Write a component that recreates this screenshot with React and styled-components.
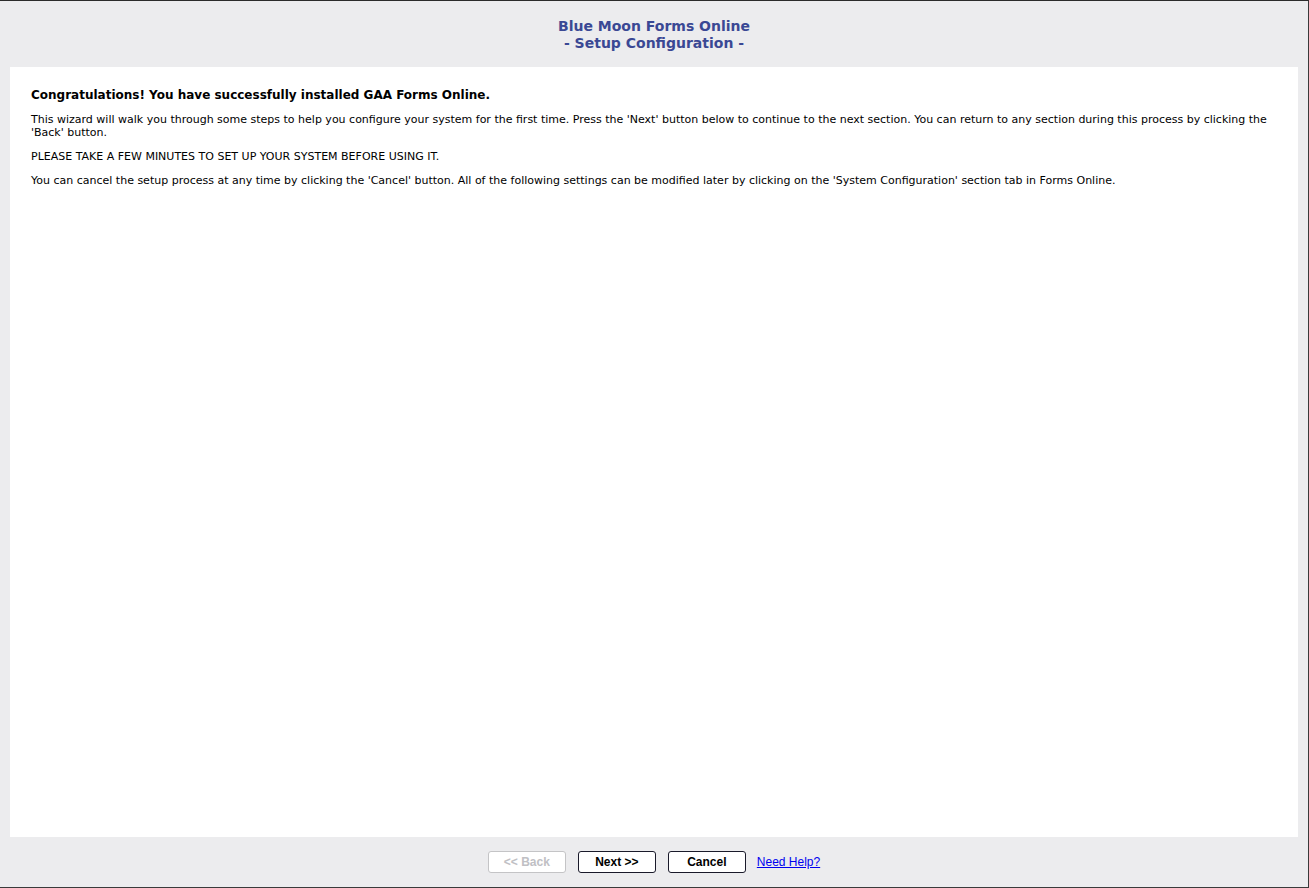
import React from 'react';
import styled, { createGlobalStyle } from 'styled-components';

const GlobalStyle = createGlobalStyle`
  html, body {
    margin: 0;
    padding: 0;
    background: #ececee;
  }
  * {
    box-sizing: border-box;
  }
`;

const Page = styled.div`
  height: 888px;
  display: flex;
  flex-direction: column;
  background: #ececee;
  border-top: 1px solid #2b2b2b;
  border-right: 1px solid #3a3a3a;
  border-bottom: 1px solid #3a3a3a;
  font-family: "DejaVu Sans", Verdana, sans-serif;
`;

const Header = styled.div`
  height: 66px;
  display: flex;
  flex-direction: column;
  align-items: center;
  justify-content: center;
  padding-top: 1px;
  color: #3a4894;
  font-weight: bold;
  font-size: 14px;
  line-height: 17px;
`;

const Panel = styled.div`
  flex: 1;
  margin: 0 10px;
  background: #fff;
  padding: 20px 20px 0 21px;
  color: #000;
`;

const Heading = styled.div`
  font-weight: bold;
  font-size: 12px;
  line-height: 16px;
  margin-bottom: 10px;
`;

const Text = styled.p`
  font-size: 11px;
  line-height: 13px;
  margin: 0 0 11px 0;
`;

const Footer = styled.div`
  height: 50px;
  display: flex;
  align-items: center;
  justify-content: center;
  gap: 12px;
  padding-bottom: 1px;
`;

const Button = styled.button`
  width: 78px;
  height: 22px;
  padding: 0;
  border: 1px solid ${(p) => (p.disabled ? '#c4c4c6' : '#1a1a2a')};
  border-radius: 3px;
  background: #fff;
  color: ${(p) => (p.disabled ? '#c0c0c4' : '#000')};
  font-family: "Liberation Sans", Arial, sans-serif;
  font-weight: bold;
  font-size: 12px;
`;

const HelpLink = styled.a`
  font-family: "Liberation Sans", Arial, sans-serif;
  font-size: 12px;
  color: #0000ee;
  text-decoration: underline;
  margin-left: -1px;
`;

export default function App() {
  return (
    <>
      <GlobalStyle />
      <Page>
        <Header>
          <div>Blue Moon Forms Online</div>
          <div>- Setup Configuration -</div>
        </Header>
        <Panel>
          <Heading>Congratulations! You have successfully installed GAA Forms Online.</Heading>
          <Text>
            This wizard will walk you through some steps to help you configure your system for the first time. Press the 'Next' button below to continue to the next section. You can return to any section during this process by clicking the 'Back' button.
          </Text>
          <Text>PLEASE TAKE A FEW MINUTES TO SET UP YOUR SYSTEM BEFORE USING IT.</Text>
          <Text>
            You can cancel the setup process at any time by clicking the 'Cancel' button. All of the following settings can be modified later by clicking on the 'System Configuration' section tab in Forms Online.
          </Text>
        </Panel>
        <Footer>
          <Button disabled>&lt;&lt; Back</Button>
          <Button>Next &gt;&gt;</Button>
          <Button>Cancel</Button>
          <HelpLink href="#">Need Help?</HelpLink>
        </Footer>
      </Page>
    </>
  );
}
